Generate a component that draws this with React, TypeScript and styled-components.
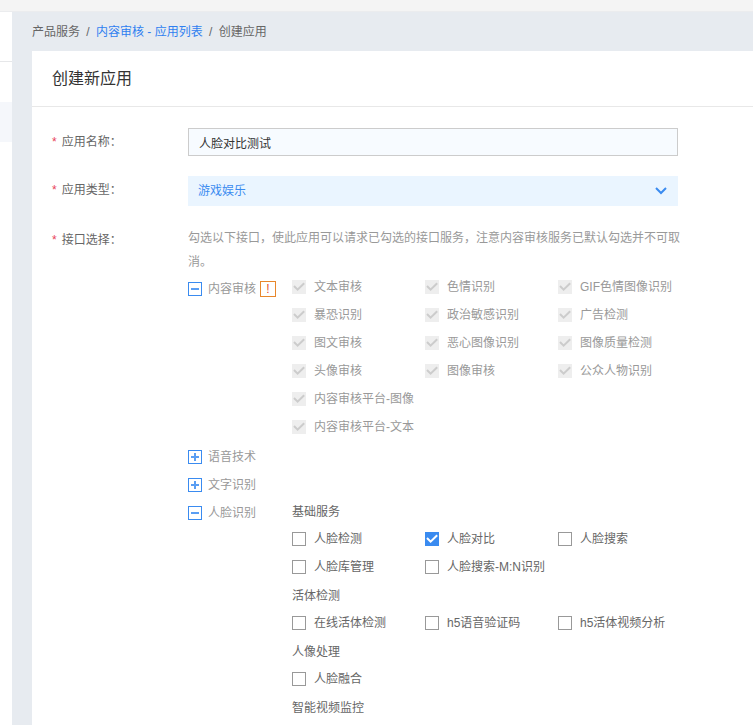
import React, { useState } from "react";
import styled, { createGlobalStyle } from "styled-components";

const blue = "#3a8bf0";

const GlobalStyle = createGlobalStyle`
  * { box-sizing: border-box; }
  body {
    margin: 0;
    background: #e7ebf0;
    color: #666;
    font: 12px/24px "Liberation Sans", "Noto Sans CJK SC", sans-serif;
  }
  input, select, button { font: inherit; }
`;

const Page = styled.div`
  min-height: 100vh;
  display: flex;
  flex-direction: column;
`;

const TopBar = styled.header`
  height: 12px;
  background: #f4f4f4;
  border-bottom: 1px solid #ebecee;
`;

const Body = styled.div`
  flex: 1;
  display: flex;
`;

const Sidebar = styled.aside`
  width: 12px;
  flex: none;
  background: #fff;
`;

const SidebarHead = styled.div`
  height: 50px;
  border-bottom: 1px solid #e6e7e9;
`;

const SidebarItem = styled.div<{ $active?: boolean }>`
  height: 40px;
  background: ${(p) => (p.$active ? "#f5f7fb" : "transparent")};
`;

const Main = styled.main`
  flex: 1;
  min-width: 0;
  padding-left: 20px;
  display: flex;
  flex-direction: column;
`;

const Breadcrumb = styled.nav`
  display: flex;
  align-items: center;
  height: 39px;
`;

const Slash = styled.span`
  width: 16px;
  text-align: center;
`;

const CrumbLink = styled.a`
  color: #2f7ff0;
  text-decoration: none;
`;

const Card = styled.section`
  flex: 1;
  background: #fff;
`;

const CardTitle = styled.h1`
  margin: 0;
  padding: 0 20px;
  color: #333;
  font-size: 16px;
  font-weight: 400;
  line-height: 55px;
  border-bottom: 1px solid #e8e8e8;
`;

const Form = styled.form`
  display: flex;
  flex-direction: column;
  gap: 20px;
  padding: 21px 20px 0;
`;

const FormRow = styled.div`
  display: flex;
`;

const labelStyle = `
  width: 136px;
  flex: none;
  display: flex;
  gap: 5px;
  line-height: 28px;
`;

const FieldLabel = styled.label`${labelStyle}`;
const FieldCaption = styled.div`${labelStyle}`;

const Star = styled.span`
  color: #e8435a;
`;

const Field = styled.div`
  flex: 1;
  min-width: 0;
  max-width: 503px;
`;

const TextInput = styled.input`
  display: block;
  width: 100%;
  max-width: 490px;
  height: 28px;
  padding: 0 10px;
  color: #333;
  background: #f7fbff;
  border: 1px solid #ccc;
  border-radius: 0;
  outline: none;
`;

const SelectBox = styled.div`
  display: grid;
  grid-template-columns: 1fr 24px;
  align-items: center;
  max-width: 490px;
  height: 30px;
  background: #eaf5ff;
`;

const Select = styled.select`
  grid-area: 1 / 1 / 2 / 3;
  width: 100%;
  height: 30px;
  padding: 0 10px;
  color: ${blue};
  background: transparent;
  border: 0;
  outline: none;
  appearance: none;
`;

const Chevron = styled.svg`
  grid-area: 1 / 2;
  pointer-events: none;
`;

const Hint = styled.p`
  margin: 0 0 1px;
  color: #999;
`;

const Node = styled.div`
  display: grid;
  grid-template-columns: 104px 1fr;
  align-items: start;
  min-height: 28px;
  padding-bottom: 4px;
`;

const NodeHead = styled.div`
  display: flex;
  align-items: center;
  height: 28px;
  margin-bottom: -4px;
  color: #999;
`;

const Toggle = styled.button`
  display: flex;
  width: 14px;
  height: 14px;
  margin-right: 6px;
  padding: 0;
  background: none;
  border: 1px solid ${blue};
  cursor: pointer;
`;

const Warning = styled.span`
  width: 16px;
  height: 16px;
  margin-left: 4px;
  color: #e6521f;
  border: 1px solid #e8872b;
  line-height: 15px;
  text-align: center;
`;

const Groups = styled.div`
  display: flex;
  flex-direction: column;
  gap: 4px;
`;

const Group = styled.div``;

const GroupTitle = styled.h2`
  margin: 0 0 2px;
  font-size: 12px;
  font-weight: 400;
  line-height: 26px;
`;

const Options = styled.div`
  display: grid;
  grid-template-columns: repeat(3, 133px);
  row-gap: 4px;
`;

const Option = styled.label<{ $muted?: boolean }>`
  display: flex;
  align-items: center;
  gap: 8px;
  height: 24px;
  color: ${(p) => (p.$muted ? "#999" : "#666")};
  white-space: nowrap;
`;

const Box = styled.span`
  display: grid;
  width: 14px;
  height: 14px;
  > * { grid-area: 1 / 1; }
`;

const Check = styled.input`
  width: 14px;
  height: 14px;
  margin: 0;
  appearance: none;
  background: #fff;
  border: 1px solid #999;
  border-radius: 0;
  &:checked { background: ${blue}; border-color: ${blue}; }
  &:disabled { background: #eee; border-color: #eee; }
  & + svg { pointer-events: none; stroke: #fff; }
  &:not(:checked) + svg { display: none; }
  &:disabled + svg { stroke: #ccc; }
`;

function CheckOption({ text, locked }: { text: string; locked?: boolean }) {
  return (
    <Option $muted={locked}>
      <Box>
        <Check type="checkbox" defaultChecked={locked || text === "人脸对比"} disabled={locked} />
        <svg width="14" height="14" viewBox="0 0 14 14" fill="none" strokeWidth="2">
          <path d="M2 6 5.6 9.6 12.2 3.2" />
        </svg>
      </Box>
      <span>{text}</span>
    </Option>
  );
}

type OptionGroup = { title?: string; items: string[] };
type Service = { name: string; locked?: boolean; open?: boolean; groups: OptionGroup[] };

const services: Service[] = [
  {
    name: "内容审核",
    locked: true,
    open: true,
    groups: [
      { items: ["文本审核", "色情识别", "GIF色情图像识别", "暴恐识别", "政治敏感识别", "广告检测", "图文审核", "恶心图像识别", "图像质量检测", "头像审核", "图像审核", "公众人物识别"] },
      { items: ["内容审核平台-图像"] },
      { items: ["内容审核平台-文本"] },
    ],
  },
  { name: "语音技术", groups: [] },
  { name: "文字识别", groups: [] },
  {
    name: "人脸识别",
    open: true,
    groups: [
      { title: "基础服务", items: ["人脸检测", "人脸对比", "人脸搜索", "人脸库管理", "人脸搜索-M:N识别"] },
      { title: "活体检测", items: ["在线活体检测", "h5语音验证码", "h5活体视频分析"] },
      { title: "人像处理", items: ["人脸融合"] },
      { title: "智能视频监控", items: [] },
    ],
  },
];

function ServiceNode({ service }: { service: Service }) {
  const [open, setOpen] = useState(!!service.open);
  return (
    <Node>
      <NodeHead>
        <Toggle type="button" aria-label={service.name} aria-expanded={open} onClick={() => setOpen(!open)}>
          <svg width="12" height="12" viewBox="0 0 12 12" stroke="#5a9ef3" strokeWidth="2">
            <path d={open ? "M2 6H10" : "M2 6H10M6 2V10"} />
          </svg>
        </Toggle>
        <span>{service.name}</span>
        {service.locked && <Warning>!</Warning>}
      </NodeHead>
      {open && (
        <Groups>
          {service.groups.map((group, i) => (
            <Group key={i}>
              {group.title && <GroupTitle>{group.title}</GroupTitle>}
              {group.items.length > 0 && (
                <Options>
                  {group.items.map((item) => (
                    <CheckOption key={item} text={item} locked={service.locked} />
                  ))}
                </Options>
              )}
            </Group>
          ))}
        </Groups>
      )}
    </Node>
  );
}

export default function App() {
  return (
    <Page>
      <GlobalStyle />
      <TopBar />
      <Body>
        <Sidebar>
          <SidebarHead />
          <SidebarItem />
          <SidebarItem $active />
        </Sidebar>
        <Main>
          <Breadcrumb>
            <span>产品服务</span>
            <Slash>/</Slash>
            <CrumbLink href="#apps">内容审核 - 应用列表</CrumbLink>
            <Slash>/</Slash>
            <span>创建应用</span>
          </Breadcrumb>
          <Card>
            <CardTitle>创建新应用</CardTitle>
            <Form>
              <FormRow>
                <FieldLabel htmlFor="app-name">
                  <Star>*</Star>应用名称：
                </FieldLabel>
                <Field>
                  <TextInput id="app-name" type="text" defaultValue="人脸对比测试" />
                </Field>
              </FormRow>
              <FormRow>
                <FieldLabel htmlFor="app-type">
                  <Star>*</Star>应用类型：
                </FieldLabel>
                <Field>
                  <SelectBox>
                    <Select id="app-type" defaultValue="game">
                      <option value="game">游戏娱乐</option>
                    </Select>
                    <Chevron width="14" height="10" viewBox="0 0 14 10" fill="none" stroke={blue} strokeWidth="2">
                      <path d="M2 2 7 7 12 2" />
                    </Chevron>
                  </SelectBox>
                </Field>
              </FormRow>
              <FormRow role="group" aria-labelledby="api-caption">
                <FieldCaption id="api-caption">
                  <Star>*</Star>接口选择：
                </FieldCaption>
                <Field>
                  <Hint>勾选以下接口，使此应用可以请求已勾选的接口服务，注意内容审核服务已默认勾选并不可取消。</Hint>
                  {services.map((service) => (
                    <ServiceNode key={service.name} service={service} />
                  ))}
                </Field>
              </FormRow>
            </Form>
          </Card>
        </Main>
      </Body>
    </Page>
  );
}
